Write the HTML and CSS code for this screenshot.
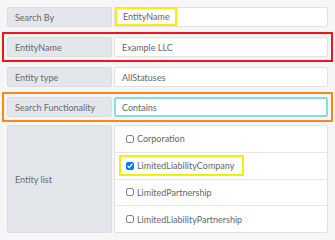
FILE: index.html
```html
<!DOCTYPE html>
<html>
<head>
<meta charset="utf-8">
<link rel="stylesheet" href="styles.css">
</head>
<body>
<div class="form">
  <div class="row r1">
    <div class="label">Search By</div>
    <div class="field"><span class="hl-yellow">EntityName</span></div>
  </div>
  <div class="row r2 hl-red">
    <div class="label">EntityName</div>
    <div class="field">Example LLC</div>
  </div>
  <div class="row r3">
    <div class="label">Entity type</div>
    <div class="field">AllStatuses</div>
  </div>
  <div class="row r4 hl-orange">
    <div class="label">Search Functionality</div>
    <div class="field focus">Contains</div>
  </div>
  <div class="row r5">
    <div class="label tall">Entity list</div>
    <div class="list">
      <div class="item"><label><input type="checkbox"> Corporation</label></div>
      <div class="item"><label class="hl-yellow2"><input type="checkbox" checked> LimitedLiabilityCompany</label></div>
      <div class="item"><label><input type="checkbox"> LimitedPartnership</label></div>
      <div class="item"><label><input type="checkbox"> LimitedLiabilityPartnership</label></div>
    </div>
  </div>
</div>
</body>
</html>
```

FILE: styles.css
```css
html, body {
  margin: 0;
  padding: 0;
  background: #f6f6f6;
}
body {
  width: 335px;
  height: 240px;
  overflow: hidden;
  font-family: Lato, "Open Sans", sans-serif;
  font-size: 9px;
  color: #666;
}
.form {
  padding: 7px 7px 0 7px;
  display: flex;
  flex-direction: column;
}
.row {
  display: flex;
  height: 20px;
  margin-bottom: 10px;
}
.r4 { margin-bottom: 8px; }
.r5 { height: 108px; }
.label {
  width: 105px;
  margin-right: 1px;
  box-sizing: border-box;
  background: #e3e6ea;
  border: 1px solid #d9dce1;
  border-radius: 2px;
  padding-left: 7px;
  display: flex;
  align-items: center;
  color: #6a6a6a;
}
.field {
  flex: 1;
  box-sizing: border-box;
  margin-left: 1px;
  background: #fff;
  border: 1px solid #e0e1e6;
  border-radius: 2px;
  padding-left: 7px;
  display: flex;
  align-items: center;
  color: #666;
}
.r1 .field { padding-left: 0; }
.hl-yellow {
  border: 2px solid #f5f000;
  height: 19px;
  box-sizing: border-box;
  display: flex;
  align-items: center;
  padding: 0 5px 0 6px;
  margin-top: -2px;
}
.hl-red {
  outline: 2px solid #f5141a;
  outline-offset: 3px;
}
.hl-orange {
  outline: 2px solid #ff8716;
  outline-offset: 3px;
}
.field.focus {
  border: 2px solid #85dcea;
  padding-left: 6px;
}
.list {
  flex: 1;
  margin-left: 1px;
  background: #fff;
  border: 1px solid #e0e1e6;
  border-radius: 2px;
  display: flex;
  flex-direction: column;
}
.item {
  flex: 1;
  display: flex;
  align-items: center;
  padding-left: 4px;
  border-bottom: 1px solid #e6e6e9;
}
.item:last-child { border-bottom: none; }
.item label {
  display: flex;
  align-items: center;
  height: 21px;
  box-sizing: border-box;
  padding: 0 8px 0 5px;
  border: 2px solid transparent;
}
.item label.hl-yellow2 {
  border-color: #f5f000;
}
.item input {
  width: 8px;
  height: 8px;
  margin: 0 3px 0 0;
}
```
